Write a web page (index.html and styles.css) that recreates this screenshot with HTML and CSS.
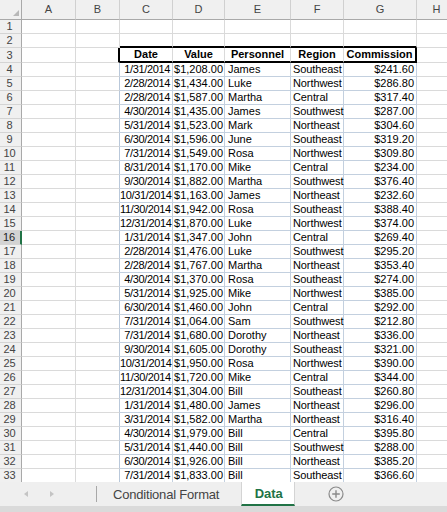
FILE: index.html
```html
<!DOCTYPE html>
<html>
<head>
<meta charset="utf-8">
<link rel="stylesheet" href="styles.css">
</head>
<body>
<div class="app">
<div class="grid-wrap">
<table class="grid">
<colgroup>
<col class="c-rh"><col class="c-a"><col class="c-b"><col class="c-c"><col class="c-d"><col class="c-e"><col class="c-f"><col class="c-g"><col class="c-h">
</colgroup>
<tr class="colhead"><th class="corner"><span class="tri"></span></th><th>A</th><th>B</th><th>C</th><th>D</th><th>E</th><th>F</th><th>G</th><th>H</th></tr>
<tr><th>1</th><td></td><td></td><td></td><td></td><td></td><td></td><td></td><td></td></tr>
<tr class="pre"><th>2</th><td></td><td></td><td></td><td></td><td></td><td></td><td></td><td></td></tr>
<tr class="hdr"><th>3</th><td></td><td></td><td>Date</td><td>Value</td><td>Personnel</td><td>Region</td><td>Commission</td><td></td></tr>
<tr class="t"><th>4</th><td></td><td></td><td>1/31/2014</td><td>$1,208.00</td><td>James</td><td>Southeast</td><td>$241.60</td><td></td></tr>
<tr class="t"><th>5</th><td></td><td></td><td>2/28/2014</td><td>$1,434.00</td><td>Luke</td><td>Northwest</td><td>$286.80</td><td></td></tr>
<tr class="t"><th>6</th><td></td><td></td><td>2/28/2014</td><td>$1,587.00</td><td>Martha</td><td>Central</td><td>$317.40</td><td></td></tr>
<tr class="t"><th>7</th><td></td><td></td><td>4/30/2014</td><td>$1,435.00</td><td>James</td><td>Southwest</td><td>$287.00</td><td></td></tr>
<tr class="t"><th>8</th><td></td><td></td><td>5/31/2014</td><td>$1,523.00</td><td>Mark</td><td>Northeast</td><td>$304.60</td><td></td></tr>
<tr class="t"><th>9</th><td></td><td></td><td>6/30/2014</td><td>$1,596.00</td><td>June</td><td>Southeast</td><td>$319.20</td><td></td></tr>
<tr class="t"><th>10</th><td></td><td></td><td>7/31/2014</td><td>$1,549.00</td><td>Rosa</td><td>Northwest</td><td>$309.80</td><td></td></tr>
<tr class="t"><th>11</th><td></td><td></td><td>8/31/2014</td><td>$1,170.00</td><td>Mike</td><td>Central</td><td>$234.00</td><td></td></tr>
<tr class="t"><th>12</th><td></td><td></td><td>9/30/2014</td><td>$1,882.00</td><td>Martha</td><td>Southwest</td><td>$376.40</td><td></td></tr>
<tr class="t"><th>13</th><td></td><td></td><td>10/31/2014</td><td>$1,163.00</td><td>James</td><td>Northeast</td><td>$232.60</td><td></td></tr>
<tr class="t"><th>14</th><td></td><td></td><td>11/30/2014</td><td>$1,942.00</td><td>Rosa</td><td>Southeast</td><td>$388.40</td><td></td></tr>
<tr class="t"><th>15</th><td></td><td></td><td>12/31/2014</td><td>$1,870.00</td><td>Luke</td><td>Northwest</td><td>$374.00</td><td></td></tr>
<tr class="t sel"><th>16</th><td></td><td></td><td>1/31/2014</td><td>$1,347.00</td><td>John</td><td>Central</td><td>$269.40</td><td></td></tr>
<tr class="t"><th>17</th><td></td><td></td><td>2/28/2014</td><td>$1,476.00</td><td>Luke</td><td>Southwest</td><td>$295.20</td><td></td></tr>
<tr class="t"><th>18</th><td></td><td></td><td>2/28/2014</td><td>$1,767.00</td><td>Martha</td><td>Northeast</td><td>$353.40</td><td></td></tr>
<tr class="t"><th>19</th><td></td><td></td><td>4/30/2014</td><td>$1,370.00</td><td>Rosa</td><td>Southeast</td><td>$274.00</td><td></td></tr>
<tr class="t"><th>20</th><td></td><td></td><td>5/31/2014</td><td>$1,925.00</td><td>Mike</td><td>Northwest</td><td>$385.00</td><td></td></tr>
<tr class="t"><th>21</th><td></td><td></td><td>6/30/2014</td><td>$1,460.00</td><td>John</td><td>Central</td><td>$292.00</td><td></td></tr>
<tr class="t"><th>22</th><td></td><td></td><td>7/31/2014</td><td>$1,064.00</td><td>Sam</td><td>Southwest</td><td>$212.80</td><td></td></tr>
<tr class="t"><th>23</th><td></td><td></td><td>7/31/2014</td><td>$1,680.00</td><td>Dorothy</td><td>Northeast</td><td>$336.00</td><td></td></tr>
<tr class="t"><th>24</th><td></td><td></td><td>9/30/2014</td><td>$1,605.00</td><td>Dorothy</td><td>Southeast</td><td>$321.00</td><td></td></tr>
<tr class="t"><th>25</th><td></td><td></td><td>10/31/2014</td><td>$1,950.00</td><td>Rosa</td><td>Northwest</td><td>$390.00</td><td></td></tr>
<tr class="t"><th>26</th><td></td><td></td><td>11/30/2014</td><td>$1,720.00</td><td>Mike</td><td>Central</td><td>$344.00</td><td></td></tr>
<tr class="t"><th>27</th><td></td><td></td><td>12/31/2014</td><td>$1,304.00</td><td>Bill</td><td>Southeast</td><td>$260.80</td><td></td></tr>
<tr class="t"><th>28</th><td></td><td></td><td>1/31/2014</td><td>$1,480.00</td><td>James</td><td>Northeast</td><td>$296.00</td><td></td></tr>
<tr class="t"><th>29</th><td></td><td></td><td>3/31/2014</td><td>$1,582.00</td><td>Martha</td><td>Northeast</td><td>$316.40</td><td></td></tr>
<tr class="t"><th>30</th><td></td><td></td><td>4/30/2014</td><td>$1,979.00</td><td>Bill</td><td>Central</td><td>$395.80</td><td></td></tr>
<tr class="t"><th>31</th><td></td><td></td><td>5/31/2014</td><td>$1,440.00</td><td>Bill</td><td>Southwest</td><td>$288.00</td><td></td></tr>
<tr class="t"><th>32</th><td></td><td></td><td>6/30/2014</td><td>$1,926.00</td><td>Bill</td><td>Northeast</td><td>$385.20</td><td></td></tr>
<tr class="t"><th>33</th><td></td><td></td><td>7/31/2014</td><td>$1,833.00</td><td>Bill</td><td>Southeast</td><td>$366.60</td><td></td></tr>
</table>
</div>
<div class="tabbar">
<div class="nav">
<span class="arrow left"></span>
<span class="arrow right"></span>
</div>
<div class="sep"></div>
<div class="tab">Conditional Format</div>
<div class="tab active">Data</div>
<div class="add">
<svg width="16" height="16" viewBox="0 0 16 16"><circle cx="8" cy="8" r="7" fill="none" stroke="#8a8a8a" stroke-width="1.2"/><path d="M8 4.2V11.8M4.2 8H11.8" stroke="#8a8a8a" stroke-width="1.4"/></svg>
</div>
</div>
<div class="bottom"></div>
</div>
</body>
</html>
```
FILE: styles.css
```css
html, body {
  margin: 0;
  padding: 0;
  background: #ffffff;
}
.app {
  width: 447px;
  height: 512px;
  overflow: hidden;
  display: flex;
  flex-direction: column;
  font-family: "Liberation Sans", Arial, sans-serif;
}
.grid-wrap {
  height: 482px;
  overflow: hidden;
  flex: none;
}
.grid {
  border-collapse: separate;
  border-spacing: 0;
  table-layout: fixed;
  width: 457px;
  font-size: 11px;
  color: #000;
}
.c-rh { width: 22px; }
.c-a { width: 54px; }
.c-b { width: 44px; }
.c-c { width: 53px; }
.c-d { width: 52px; }
.c-e { width: 66px; }
.c-f { width: 53px; }
.c-g { width: 73px; }
.c-h { width: 40px; }

.grid td, .grid th {
  box-sizing: border-box;
  padding: 0;
  height: 14px;
  line-height: 13px;
  border-right: 1px solid #dadada;
  border-bottom: 1px solid #dadada;
  white-space: nowrap;
  vertical-align: middle;
}
.grid tr { height: 14px; }

.grid th {
  background: #f0f0f0;
  color: #444;
  font-weight: normal;
  font-size: 11px;
  text-align: center;
  border-right: 1px solid #a9a9a9;
  border-bottom: 1px solid #d4d4d4;
}
.grid th:first-child {
  text-align: center;
  padding-right: 2px;
}
.grid .colhead { height: 20px; }
.grid .colhead th {
  height: 20px;
  border-right: 1px solid #d0d0d0;
  border-bottom: 1px solid #a9a9a9;
  text-align: center;
  padding: 0;
}
.grid .colhead th.corner {
  position: relative;
  border-right: 1px solid #a9a9a9;
}
.tri {
  position: absolute;
  right: 2px;
  bottom: 3px;
  width: 0;
  height: 0;
  border-left: 6px solid transparent;
  border-bottom: 6px solid #b8b8b8;
}

/* header box C3:G3 */
.pre td:nth-child(n+4):nth-child(-n+8) {
  border-bottom: 2px solid #000;
}
.hdr td:nth-child(3) {
  border-right: 2px solid #000;
}
.hdr td:nth-child(n+4):nth-child(-n+8) {
  border-bottom: 2px solid #000;
  font-weight: bold;
  text-align: center;
}
.hdr td:nth-child(8) {
  border-right: 2px solid #000;
}

/* table body */
.t td:nth-child(3) {
  border-right-color: #b9c8da;
}
.t td:nth-child(n+4):nth-child(-n+8) {
  border-right-color: #c3d0df;
  border-bottom-color: #c3d0df;
}
.t td:nth-child(4),
.t td:nth-child(5),
.t td:nth-child(8) {
  text-align: right;
  padding-right: 1px;
}
.t td:nth-child(4) {
  letter-spacing: -0.35px;
  padding-right: 2px;
}
.t td:nth-child(8) {
  padding-right: 2px;
}
.t td:nth-child(6) {
  padding-left: 3px;
}
.t td:nth-child(7) {
  padding-left: 2px;
  letter-spacing: -0.1px;
}

.sel th {
  background: #d3d3d3;
  color: #222;
  border-right: 2px solid #217346;
}

/* tab bar */
.tabbar {
  flex: none;
  height: 24px;
  background: #efefef;
  display: flex;
  align-items: stretch;
  font-size: 13px;
  color: #444;
}
.nav {
  width: 96px;
  display: flex;
  align-items: center;
}
.arrow {
  width: 0;
  height: 0;
  border-top: 3px solid transparent;
  border-bottom: 3px solid transparent;
}
.arrow.left {
  margin-left: 24px;
  border-right: 4px solid #c4c4c4;
}
.arrow.right {
  margin-left: 22px;
  border-left: 4px solid #c4c4c4;
}
.sep {
  width: 1px;
  margin: 4px 0 4px 0;
  background: #a8a8a8;
}
.tab {
  display: flex;
  align-items: center;
  padding: 0 22px 0 16px;
  white-space: nowrap;
  letter-spacing: -0.2px;
}
.tab.active {
  background: #ffffff;
  color: #217346;
  font-weight: bold;
  letter-spacing: 0;
  width: 54px;
  box-sizing: border-box;
  padding: 0 0 0 1px;
  justify-content: center;
  border-bottom: 2px solid #217346;
  border-left: 1px solid #d4d4d4;
  border-right: 1px solid #d4d4d4;
}
.add {
  display: flex;
  align-items: center;
  margin-left: 33px;
}
.bottom {
  flex: 1;
  background: #dadada;
}
```
